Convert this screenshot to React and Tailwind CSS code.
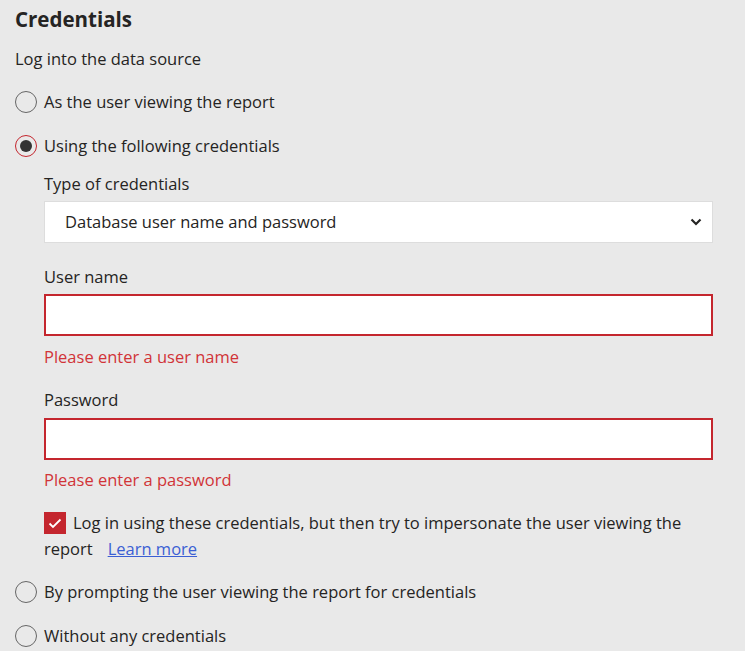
const font = { fontFamily: '"Open Sans", "Noto Sans", sans-serif' };

function Radio({ checked, label, className = "" }) {
  return (
    <div className={`flex h-[24px] items-center ${className}`}>
      <span
        className={`flex h-[22px] w-[22px] shrink-0 items-center justify-center rounded-full border bg-transparent ${
          checked ? "border-[#c4262e]" : "border-[#666666]"
        }`}
      >
        {checked && <span className="h-[12px] w-[12px] rounded-full bg-[#333333]" />}
      </span>
      <span className="ml-[7px] leading-[24px]">{label}</span>
    </div>
  );
}

function ErrorText({ children, className = "" }) {
  return <div className={`h-[24px] leading-[24px] text-[#d13438] ${className}`}>{children}</div>;
}

export default function App() {
  return (
    <div
      className="min-h-[651px] w-full overflow-hidden bg-[#e9e9e9] px-[15px] pb-4 text-[16.5px] text-[#252423]"
      style={font}
    >
      <h1 className="mt-[4px] h-[30px] text-[20.5px] font-bold leading-[30px]">Credentials</h1>
      <p className="mt-[13px] h-[24px] leading-[24px]">Log into the data source</p>

      <Radio className="mt-[19px]" label="As the user viewing the report" />
      <Radio className="mt-[20px]" checked label="Using the following credentials" />

      <div className="w-[698px] pl-[29px]">
        <div className="mt-[14px] h-[24px] leading-[24px]">Type of credentials</div>
        <div className="mt-[5px] flex h-[42px] items-center justify-between border border-[#dddddd] bg-white pl-[20px] pr-[10px]">
          <span>Database user name and password</span>
          <svg width="12" height="8" viewBox="0 0 12 8">
            <path d="M1.5 1.5 L6 6 L10.5 1.5" fill="none" stroke="#252423" strokeWidth="2.2" />
          </svg>
        </div>

        <div className="mt-[22px] h-[24px] leading-[24px]">User name</div>
        <input
          type="text"
          className="mt-[5px] block h-[42px] w-full border-2 border-[#c4262e] bg-white px-2 outline-none"
        />
        <ErrorText className="mt-[9px]">Please enter a user name</ErrorText>

        <div className="mt-[19px] h-[24px] leading-[24px]">Password</div>
        <input
          type="password"
          className="mt-[6px] block h-[42px] w-full border-2 border-[#c4262e] bg-white px-2 outline-none"
        />
        <ErrorText className="mt-[8px]">Please enter a password</ErrorText>

        <p className="mt-[18px] h-[52px] leading-[26px]">
          <span className="mr-[7px] mt-[2px] inline-flex h-[22px] w-[22px] items-center justify-center bg-[#c4262e] align-top">
            <svg width="14" height="11" viewBox="0 0 14 11">
              <path d="M1.5 5.5 L5 9 L12.5 1.5" fill="none" stroke="white" strokeWidth="1.8" />
            </svg>
          </span>
          Log in using these credentials, but then try to impersonate the user viewing the
          <br />
          report
          <a href="#" className="ml-[15px] text-[#3b5fd4] underline">
            Learn more
          </a>
        </p>
      </div>

      <Radio className="mt-[18px]" label="By prompting the user viewing the report for credentials" />
      <Radio className="mt-[20px]" label="Without any credentials" />
    </div>
  );
}
